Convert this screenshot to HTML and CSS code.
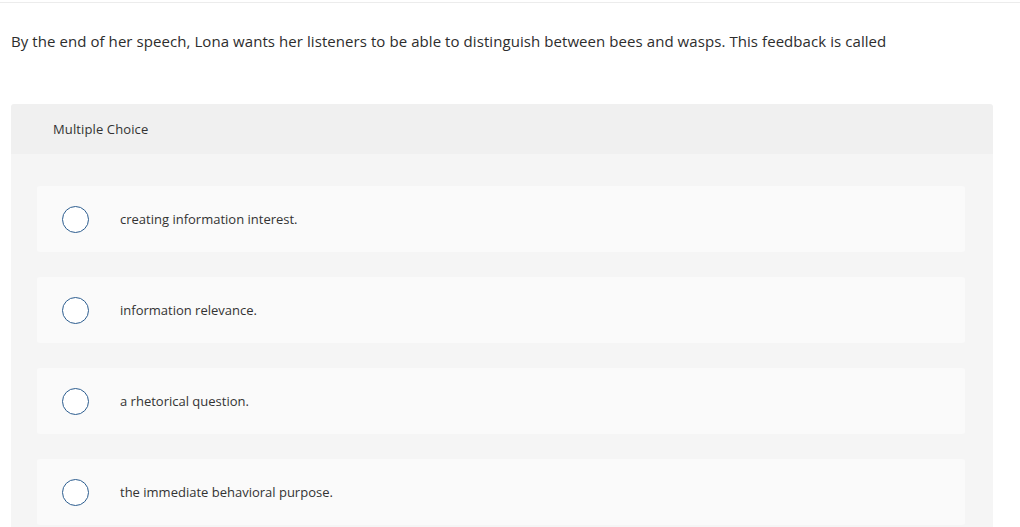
FILE: index.html
```html
<!DOCTYPE html>
<html>
<head>
<meta charset="utf-8">
<link rel="stylesheet" href="styles.css">
</head>
<body>
<div class="page">
  <div class="topline"></div>
  <p class="question">By the end of her speech, Lona wants her listeners to be able to distinguish between bees and wasps. This feedback is called</p>
  <div class="card">
    <div class="card-head">Multiple Choice</div>
    <div class="card-body">
      <div class="option"><span class="radio"></span><span class="label">creating information interest.</span></div>
      <div class="option"><span class="radio"></span><span class="label">information relevance.</span></div>
      <div class="option"><span class="radio"></span><span class="label">a rhetorical question.</span></div>
      <div class="option"><span class="radio"></span><span class="label">the immediate behavioral purpose.</span></div>
    </div>
  </div>
</div>
</body>
</html>
```
FILE: styles.css
```css
html, body {
  margin: 0;
  padding: 0;
  background: #fff;
  overflow: hidden;
}
body {
  font-family: "Open Sans", Roboto, sans-serif;
  color: #333;
}
.page {
  width: 1020px;
  height: 527px;
  padding-top: 2px;
  box-sizing: border-box;
}
.topline {
  height: 1px;
  background: #ececec;
}
.question {
  margin: 0;
  padding: 28px 0 0 11px;
  height: 71px;
  box-sizing: border-box;
  font-size: 15px;
  line-height: 20px;
  letter-spacing: 0.07px;
  color: #2d2d2d;
}
.card {
  margin: 30px 0 0 11px;
  width: 982px;
  border-radius: 3px 3px 0 0;
  overflow: hidden;
}
.card-head {
  height: 50px;
  background: #f0f0f0;
  display: flex;
  align-items: center;
  padding-left: 42px;
  font-size: 13px;
  letter-spacing: 0.12px;
  color: #333;
}
.card-body {
  background: #f5f5f5;
  padding: 32px 28px 10px 26px;
  display: flex;
  flex-direction: column;
  gap: 25px;
}
.option {
  height: 66px;
  background: #fafafa;
  border-radius: 3px;
  display: flex;
  align-items: center;
  padding-left: 25px;
}
.radio {
  width: 25px;
  height: 25px;
  border: 1.5px solid #2c5d8f;
  border-radius: 50%;
  background: #fff;
  flex: none;
}
.label {
  margin-left: 31px;
  font-size: 13px;
  color: #333;
}
```
